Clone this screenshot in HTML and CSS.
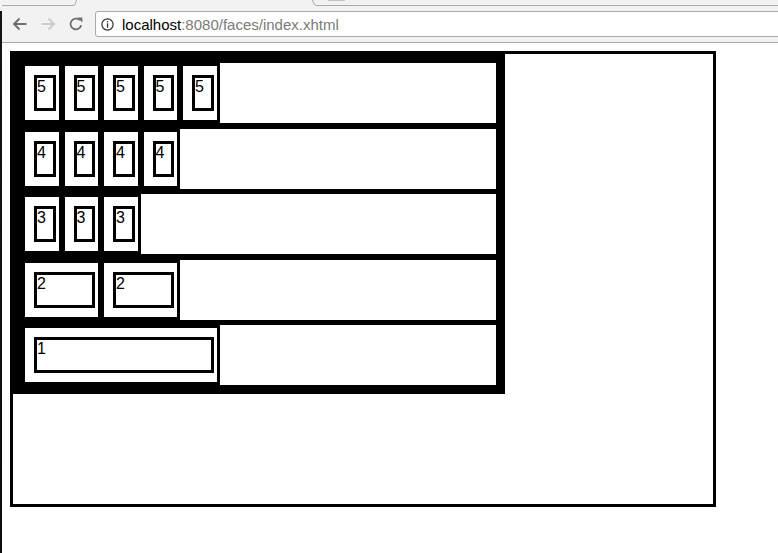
FILE: index.html
```html
<!DOCTYPE html>
<html lang="en">
<head>
<meta charset="utf-8">
<title>index.xhtml</title>
<link rel="stylesheet" href="styles.css">
</head>
<body>
<div class="desk-edge"></div>
<div class="window">
  <div class="tabstrip">
    <svg class="tab-lines" width="776" height="6" viewBox="0 0 776 6">
      <path d="M0 5.5 H71 Q73 5.5 73.5 3 L74.5 0" fill="none" stroke="#a9a9a9" stroke-width="1"/>
      <path d="M310.5 0 L311.5 3 Q312 5.5 315 5.5 H776" fill="none" stroke="#a9a9a9" stroke-width="1"/>
      <rect x="326" y="0" width="17" height="1" fill="#c4c4c4"/>
    </svg>
  </div>
  <div class="toolbar">
    <span class="nav-btn">
      <svg width="16" height="16" viewBox="0 0 16 16"><path d="M14.5 8 H2.5 M7.5 2.5 L2 8 L7.5 13.5" fill="none" stroke="#6e6e6e" stroke-width="1.8"/></svg>
    </span>
    <span class="nav-btn">
      <svg width="16" height="16" viewBox="0 0 16 16"><path d="M1.5 8 H13.5 M8.5 2.5 L14 8 L8.5 13.5" fill="none" stroke="#cdcdcd" stroke-width="1.8"/></svg>
    </span>
    <span class="nav-btn">
      <svg width="16" height="16" viewBox="0 0 16 16"><path d="M13.2 9.2 A5.4 5.4 0 1 1 11.8 4.2" fill="none" stroke="#6e6e6e" stroke-width="1.8"/><path d="M9.2 1.4 H14.4 V6.6 Z" fill="#6e6e6e"/></svg>
    </span>
    <div class="omnibox">
      <svg class="info-icon" width="13" height="13" viewBox="0 0 13 13"><circle cx="6.5" cy="6.5" r="5.6" fill="none" stroke="#333" stroke-width="1.2"/><rect x="5.9" y="5.3" width="1.3" height="4.4" fill="#333"/><rect x="5.9" y="3.1" width="1.3" height="1.3" fill="#333"/></svg>
      <span class="url"><span class="host">localhost</span><span class="path">:8080/faces/index.xhtml</span></span>
    </div>
  </div>
  <div class="page">
    <div class="frame">
      <div class="grid">
        <div class="row">
          <div class="group">
            <div class="cell span-1"><div class="box">5</div></div>
            <div class="cell span-1"><div class="box">5</div></div>
            <div class="cell span-1"><div class="box">5</div></div>
            <div class="cell span-1"><div class="box">5</div></div>
            <div class="cell span-1"><div class="box">5</div></div>
          </div>
        </div>
        <div class="row">
          <div class="group">
            <div class="cell span-1"><div class="box">4</div></div>
            <div class="cell span-1"><div class="box">4</div></div>
            <div class="cell span-1"><div class="box">4</div></div>
            <div class="cell span-1"><div class="box">4</div></div>
          </div>
        </div>
        <div class="row">
          <div class="group">
            <div class="cell span-1"><div class="box">3</div></div>
            <div class="cell span-1"><div class="box">3</div></div>
            <div class="cell span-1"><div class="box">3</div></div>
          </div>
        </div>
        <div class="row">
          <div class="group">
            <div class="cell span-2"><div class="box">2</div></div>
            <div class="cell span-2"><div class="box">2</div></div>
          </div>
        </div>
        <div class="row">
          <div class="group">
            <div class="cell span-5"><div class="box">1</div></div>
          </div>
        </div>
      </div>
    </div>
  </div>
</div>
</body>
</html>
```

FILE: styles.css
```css
html, body {
  margin: 0;
  padding: 0;
  background: #ffffff;
}

body {
  display: flex;
  width: 778px;
  height: 553px;
  overflow: hidden;
  font-family: "Liberation Sans", Arial, sans-serif;
}

.desk-edge {
  flex: none;
  width: 2px;
  background: linear-gradient(to bottom, #f2f2f2 0, #f2f2f2 11px, #141414 11px, #0c0c0c 100%);
}

.window {
  flex: none;
  width: 776px;
  display: flex;
  flex-direction: column;
}

.tabstrip {
  height: 6px;
  background: #f2f2f2;
}

.tab-lines {
  display: block;
}

.toolbar {
  height: 36px;
  background: #f2f2f2;
  border-bottom: 1px solid #a9a9a9;
  display: flex;
  align-items: flex-start;
  padding: 5px 0 0 4px;
  box-sizing: border-box;
  height: 37px;
  overflow: hidden;
}

.nav-btn {
  flex: none;
  width: 28px;
  height: 26px;
  display: flex;
  align-items: center;
  justify-content: center;
}

.omnibox {
  flex: none;
  margin-left: 5px;
  width: 800px;
  height: 24px;
  border: 1px solid #a9a9a9;
  border-radius: 3px;
  background: #ffffff;
  display: flex;
  align-items: center;
  padding-left: 5px;
}

.info-icon {
  flex: none;
  display: block;
}

.url {
  margin-left: 8px;
  font-size: 15px;
  line-height: 23px;
  white-space: nowrap;
}

.host {
  color: #000000;
}

.path {
  color: #7a7a7a;
}

.page {
  padding: 8px;
}

.frame {
  width: 700px;
  height: 450px;
  border: 3px solid #000000;
}

.grid {
  width: 474px;
  padding: 9px;
  background: #000000;
  display: flex;
  flex-direction: column;
  gap: 5.5px;
}

.row {
  height: 60px;
  background: #ffffff;
  display: flex;
}

.group {
  background: #000000;
  padding: 3px;
  display: flex;
  gap: 6px;
}

.cell {
  box-sizing: border-box;
  height: 54px;
  background: #ffffff;
  padding: 9px 3px 9px 9px;
}

.span-1 {
  width: 33.5px;
}

.span-2 {
  width: 73px;
}

.span-5 {
  width: 191.5px;
}

.box {
  box-sizing: border-box;
  width: 100%;
  height: 36px;
  border: 3px solid #000000;
  font-size: 16px;
  line-height: normal;
  color: #000000;
}
```
